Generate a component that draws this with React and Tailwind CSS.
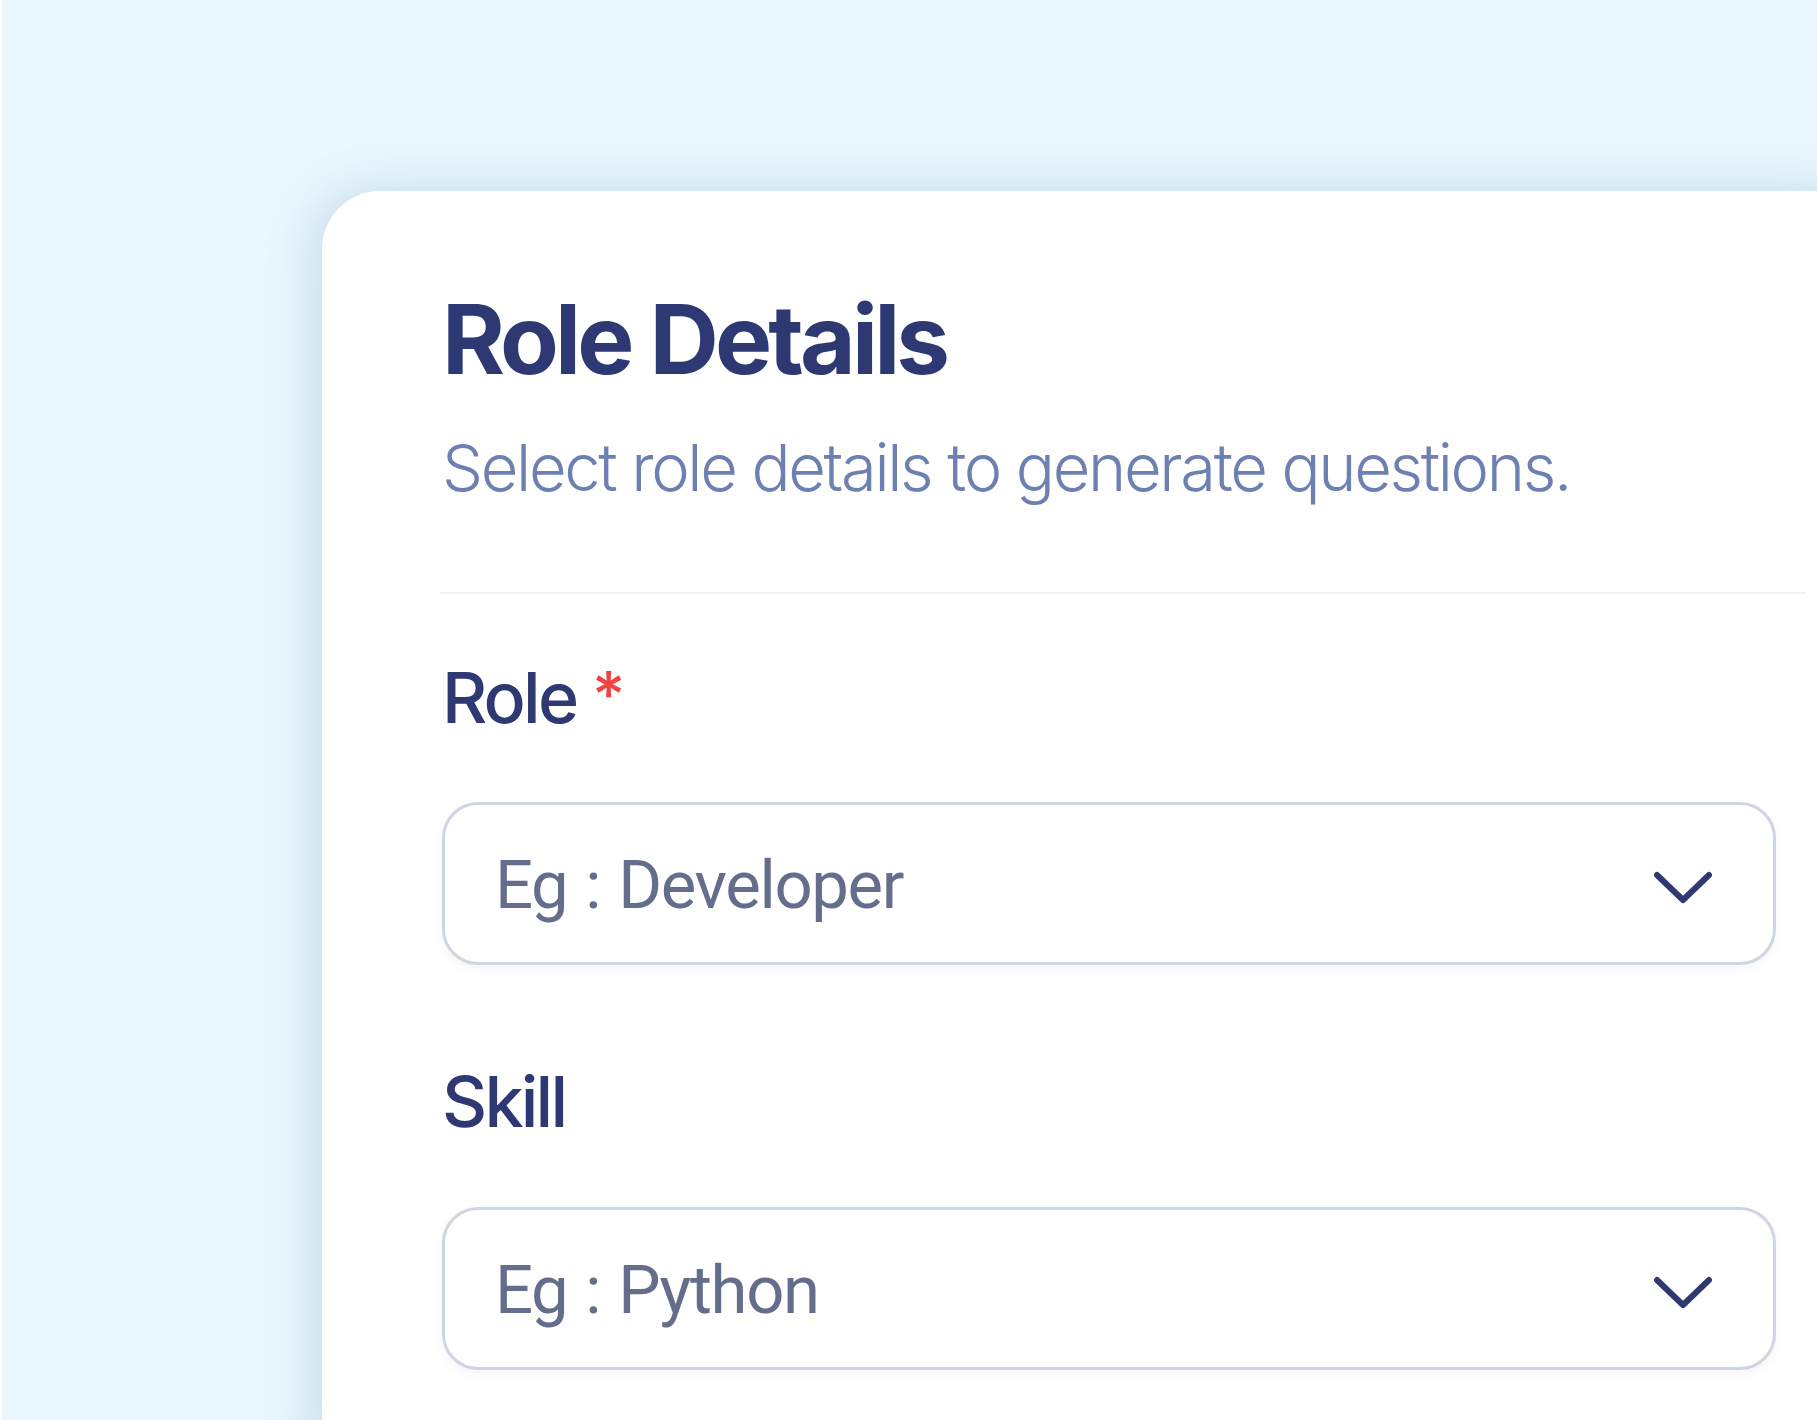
const ChevronDown = () => (
  <svg width="60" height="36" viewBox="0 0 60 36" fill="none" className="shrink-0 mt-2">
    <path
      d="M4 5 L30 30 L56 5"
      stroke="#2e3873"
      strokeWidth="6"
      strokeLinecap="round"
      strokeLinejoin="round"
    />
  </svg>
);

const SelectBox = ({ placeholder }) => (
  <div className="flex items-center justify-between w-[1334px] h-[163px] pl-[50px] pr-[60px] border-[3px] border-[#cfd6e2] rounded-[36px] bg-white shadow-[0_4px_8px_rgba(30,50,90,0.05)]">
    <span
      className="text-[67px] leading-none pt-1 text-[#646e8c] tracking-[-0.02em] [word-spacing:0.04em]"
      style={{ fontFamily: 'Roboto, "Liberation Sans", sans-serif' }}
    >
      {placeholder}
    </span>
    <ChevronDown />
  </div>
);

const App = () => {
  return (
    <div
      className="h-[1420px] w-full overflow-hidden bg-[#eaf7fd] border-l-2 border-white pt-[191px] pl-[320px]"
      style={{ fontFamily: 'Inter, "Noto Sans", sans-serif' }}
    >
      <div className="w-[1560px] h-[1300px] bg-white rounded-[58px] pt-[100px] pl-[120px] shadow-[-8px_0_50px_rgba(150,185,215,0.45)]">
        {/* Header */}
        <h1 className="text-[96px] leading-none font-bold text-[#2e3873] tracking-[-0.04em]">
          Role Details
        </h1>
        <p className="mt-[48px] text-[65px] leading-none font-light text-[#6e7fb1] tracking-[-0.036em]">
          Select role details to generate questions.
        </p>

        <div className="mt-[92px] w-[1366px] h-[2px] -ml-[2px] bg-[#eef1f5]" />

        {/* Role */}
        <label className="block mt-[69px] text-[70px] leading-none font-medium text-[#2e3873] tracking-[-0.04em]">
          Role <span className="text-[#ef4444] text-[64px] align-top">*</span>
        </label>
        <div className="mt-[69px]">
          <SelectBox placeholder="Eg : Developer" />
        </div>

        {/* Skill */}
        <label className="block mt-[102px] text-[70px] leading-none font-medium text-[#2e3873] tracking-[-0.04em]">
          Skill
        </label>
        <div className="mt-[70px]">
          <SelectBox placeholder="Eg : Python" />
        </div>
      </div>
    </div>
  );
};

export default App;
